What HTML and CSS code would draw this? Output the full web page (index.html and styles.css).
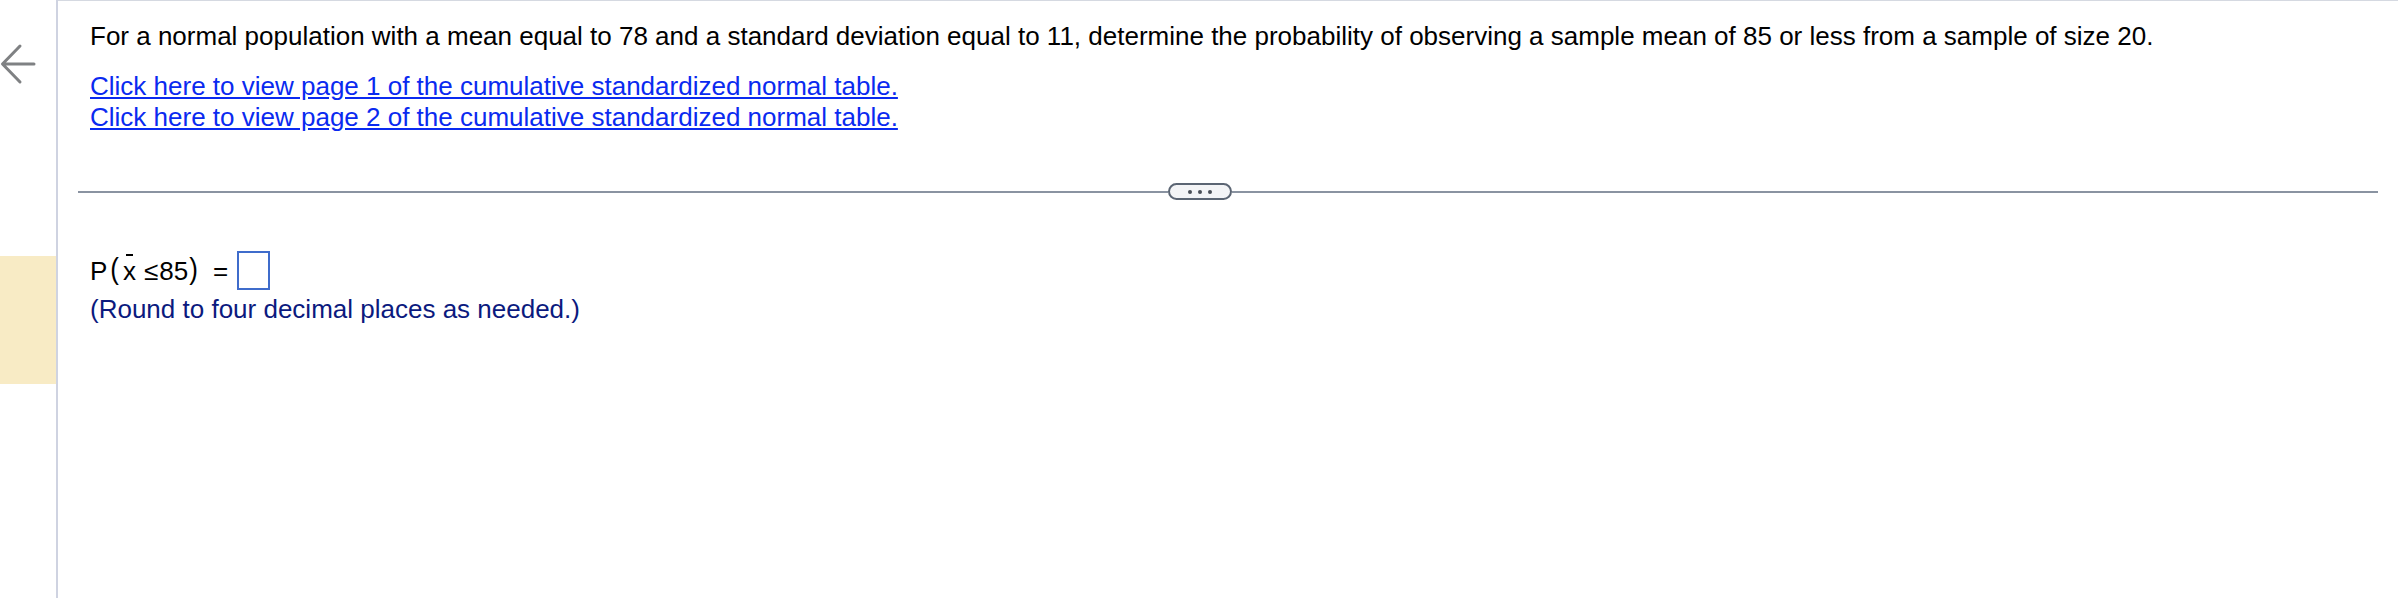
FILE: index.html
```html
<!DOCTYPE html>
<html lang="en">
<head>
<meta charset="utf-8">
<title>Sampling distribution question</title>
<link rel="stylesheet" href="styles.css">
</head>
<body>
<div class="page">
  <aside class="rail">
    <button class="back" aria-label="Back">
      <svg width="36" height="42" viewBox="0 0 36 42" aria-hidden="true">
        <path d="M34 21 H3 M20 3 L2.5 21 L20 39" fill="none" stroke="#7f8183" stroke-width="3" stroke-linecap="round" stroke-linejoin="round"/>
      </svg>
    </button>
    <div class="marker"></div>
  </aside>
  <main class="content">
    <section class="question">
      <p class="stem">For a normal population with a mean equal to 78 and a standard deviation equal to 11, determine the probability of observing a sample mean of 85 or less from a sample of size 20.</p>
      <div class="links">
        <a href="#" class="link">Click here to view page 1 of the cumulative standardized normal table.</a>
        <a href="#" class="link">Click here to view page 2 of the cumulative standardized normal table.</a>
      </div>
    </section>
    <div class="divider">
      <span class="rule rule-left"></span>
      <span class="pill"><span class="dot"></span><span class="dot"></span><span class="dot"></span></span>
      <span class="rule rule-right"></span>
    </div>
    <section class="answer">
      <div class="formula">
        <span class="sym">P</span>
        <span class="paren open">(</span>
        <span class="sym xbar">x</span>
        <span class="sym le">≤</span>
        <span class="sym num">85</span>
        <span class="paren close">)</span>
        <span class="sym eq">=</span>
        <span class="input-box"></span>
      </div>
      <p class="hint">(Round to four decimal places as needed.)</p>
    </section>
  </main>
</div>
</body>
</html>
```

FILE: styles.css
```css
html, body {
  margin: 0;
  padding: 0;
  background: #ffffff;
}

body {
  font-family: "Liberation Sans", Arial, sans-serif;
  font-size: 26px;
  color: #000000;
}

.page {
  display: flex;
  height: 598px;
  overflow: hidden;
}

.rail {
  width: 56px;
  flex: 0 0 56px;
  border-right: 2px solid #cfd3e1;
  display: flex;
  flex-direction: column;
}

.back {
  margin: 43px 0 0 0;
  padding: 0;
  border: 0;
  background: transparent;
  width: 36px;
  height: 42px;
  display: block;
}

.back svg {
  display: block;
}

.marker {
  margin-top: 171px;
  height: 128px;
  background: #f8ebc5;
}

.content {
  flex: 1;
  border-top: 1px solid #d5d9e1;
  padding: 0 20px 0 20px;
}

.question {
  padding: 20px 0 0 12px;
}

.stem {
  margin: 0;
  line-height: 31px;
}

.links {
  margin-top: 19px;
  display: flex;
  flex-direction: column;
  line-height: 31px;
}

.link {
  color: #0a2af0;
  text-decoration: underline;
  text-underline-offset: 2px;
  align-self: flex-start;
}

.divider {
  display: flex;
  align-items: center;
  height: 17px;
  margin-top: 50px;
}

.rule {
  height: 2px;
  background: #8a93a1;
}

.rule-left {
  width: 1090px;
}

.rule-right {
  flex: 1;
}

.pill {
  width: 60px;
  height: 13px;
  border: 2px solid #5b6573;
  border-radius: 9px;
  background: #f3f4f6;
  display: flex;
  align-items: center;
  justify-content: center;
  gap: 6px;
}

.dot {
  width: 4px;
  height: 4px;
  border-radius: 50%;
  background: #4a4f57;
}

.answer {
  padding: 51px 0 0 12px;
}

.formula {
  display: flex;
  align-items: center;
  height: 39px;
}

.sym {
  line-height: 26px;
}

.paren {
  display: inline-block;
  line-height: 26px;
  transform: translateY(-2px) scaleY(1.15);
}

.open {
  margin-left: 3px;
}

.xbar {
  position: relative;
  margin-left: 4px;
}

.xbar::before {
  content: "";
  position: absolute;
  left: 3px;
  top: -4px;
  width: 7px;
  height: 2px;
  background: #000000;
}

.le {
  margin-left: 8px;
}

.num {
  margin-left: 1px;
}

.close {
  margin-left: 1px;
}

.eq {
  margin-left: 15px;
}

.input-box {
  margin-left: 9px;
  width: 29px;
  height: 35px;
  border: 2px solid #3f6ccb;
  background: #ffffff;
}

.hint {
  margin: 4px 0 0 0;
  color: #0b1a7e;
  line-height: 31px;
}
```
